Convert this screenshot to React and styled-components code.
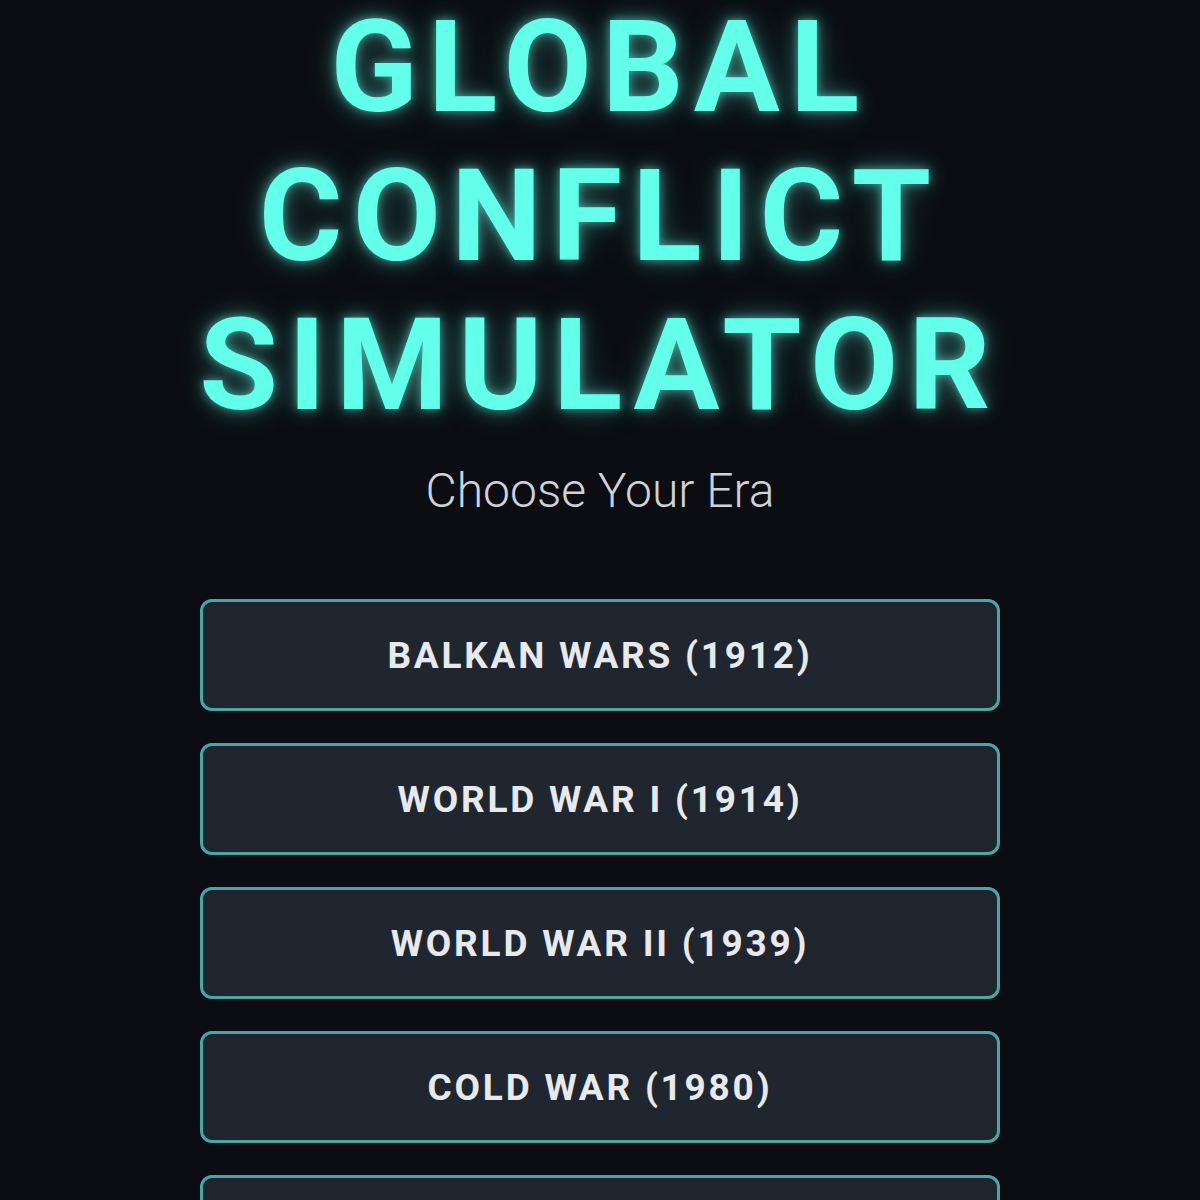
import styled, { createGlobalStyle } from "styled-components";

const eras = [
  "Balkan Wars (1912)",
  "World War I (1914)",
  "World War II (1939)",
  "Cold War (1980)",
  "Modern Day (2024)",
];

const GlobalStyle = createGlobalStyle`
  html, body {
    margin: 0;
    padding: 0;
    background: #0b0d12;
    overflow: hidden;
  }
  body {
    font-family: Roboto, "Liberation Sans", sans-serif;
  }
`;

const Screen = styled.main`
  min-height: 100vh;
  display: flex;
  flex-direction: column;
  align-items: center;
  background: #0b0d12;
`;

const Title = styled.h1`
  margin: -7px 0 0;
  font-size: 128px;
  font-weight: 700;
  line-height: 149px;
  letter-spacing: 0.08em;
  text-align: center;
  text-transform: uppercase;
  color: #64ffeb;
  text-shadow:
    0 0 8px rgba(100, 255, 235, 0.5),
    0 0 20px rgba(100, 255, 235, 0.35),
    0 0 40px rgba(100, 255, 235, 0.18);
`;

const Subtitle = styled.p`
  margin: 22px 0 0;
  font-size: 48px;
  font-weight: 300;
  color: #cfd2d6;
`;

const EraList = styled.div`
  margin-top: 80px;
  width: 800px;
  display: flex;
  flex-direction: column;
  gap: 32px;
`;

const EraButton = styled.button`
  height: 112px;
  box-sizing: border-box;
  border: 3px solid #4aa8a4;
  border-radius: 12px;
  background: #1f2630;
  color: #e8e9eb;
  font-family: Roboto, "Liberation Sans", sans-serif;
  font-size: 37px;
  font-weight: 700;
  letter-spacing: 0.075em;
  text-transform: uppercase;
  cursor: pointer;
`;

export default function App() {
  return (
    <>
      <GlobalStyle />
      <Screen>
        <Title>
          Global
          <br />
          Conflict
          <br />
          Simulator
        </Title>
        <Subtitle>Choose Your Era</Subtitle>
        <EraList>
          {eras.map((era) => (
            <EraButton key={era}>{era}</EraButton>
          ))}
        </EraList>
      </Screen>
    </>
  );
}
